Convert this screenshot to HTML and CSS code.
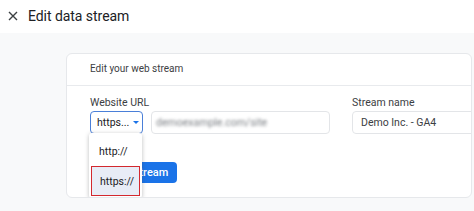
FILE: index.html
```html
<!DOCTYPE html>
<html>
<head>
<meta charset="utf-8">
<link rel="stylesheet" href="styles.css">
</head>
<body>
<header class="topbar">
  <svg class="close" width="10" height="10" viewBox="0 0 10 10"><path d="M1 1L9 9M9 1L1 9" stroke="#3c4043" stroke-width="1.4" fill="none"/></svg>
  <h1 class="title">Edit data stream</h1>
</header>
<main class="page">
  <section class="card">
    <div class="card-head">Edit your web stream</div>
    <div class="card-body">
      <div class="fields">
        <div class="field">
          <div class="label">Website URL</div>
          <div class="url-row">
            <div class="select">https... <span class="caret"></span></div>
            <div class="input url"><span class="blur">demoexample.com/site</span></div>
          </div>
        </div>
        <div class="field">
          <div class="label">Stream name</div>
          <div class="input stream">Demo Inc. - GA4</div>
        </div>
      </div>
      <button class="btn">Create stream</button>
      <div class="menu">
        <div class="opt">http://</div>
        <div class="opt sel">https://</div>
      </div>
    </div>
  </section>
</main>
</body>
</html>
```
FILE: styles.css
```css
* { box-sizing: border-box; }
html, body { margin: 0; padding: 0; }
body {
  width: 474px; height: 211px; overflow: hidden;
  font-family: Roboto, "Liberation Sans", sans-serif;
  background: #f8f9fa; color: #202124;
}
.topbar {
  height: 33px; background: #fff;
  display: flex; align-items: center;
  padding: 0 0 2px 8px; gap: 10px;
}
.close { flex: none; }
.title { margin: 0; font-size: 14px; font-weight: 400; letter-spacing: -0.05px; color: #202124; }
.page { padding: 20px 2px 0 66px; }
.card {
  background: #fff; border: 1px solid #e6e8eb; border-radius: 6px;
  height: 145px; overflow: hidden;
}
.card-head {
  height: 32px; border-bottom: 1px solid #e8eaed;
  display: flex; align-items: center; padding: 0 0 2px 23px;
  font-size: 10px; color: #3c4043;
}
.card-body { position: relative; padding: 10px 0 0 23px; }
.fields { display: flex; gap: 22px; }
.label { font-size: 10.5px; color: #3c4043; height: 15px; }
.url-row { display: flex; gap: 8px; }
.select {
  width: 53px; height: 23px; border: 1.5px solid #4a7fd8; border-radius: 4px;
  display: flex; align-items: center; padding-left: 6px; gap: 2px;
  font-size: 10.5px; color: #202124;
}
.caret { width: 0; height: 0; border-left: 3px solid transparent; border-right: 3px solid transparent; border-top: 3px solid #1a73e8; margin-left: 2px; }
.input {
  height: 23px; border: 1px solid #e3e5e8; border-radius: 4px;
  display: flex; align-items: center; padding-left: 8px;
  font-size: 10.5px; color: #3c4043;
}
.url { width: 179px; padding-left: 4px; }
.blur { color: #7d8186; filter: blur(1.4px); }
.stream { width: 140px; }
.btn {
  margin-top: 28px; height: 21px; width: 87px;
  background: #1a73e8; color: #fff; border: 0; border-radius: 4px;
  font-family: inherit; font-size: 11px; font-weight: 500; padding: 0;
}
.menu {
  position: absolute; left: 22px; top: 47px; width: 53px; height: 65px;
  background: #fff; border-radius: 3px;
  box-shadow: 0 1px 4px rgba(60,64,67,0.35);
  padding-top: 3px;
}
.opt { height: 30px; display: flex; align-items: center; padding-left: 10px; font-size: 10.5px; color: #202124; }
.opt.sel { background: #e8ecf6; border: 1.5px solid #d3282e; margin: 0 2px; padding-left: 8px; height: 30px; }
```
